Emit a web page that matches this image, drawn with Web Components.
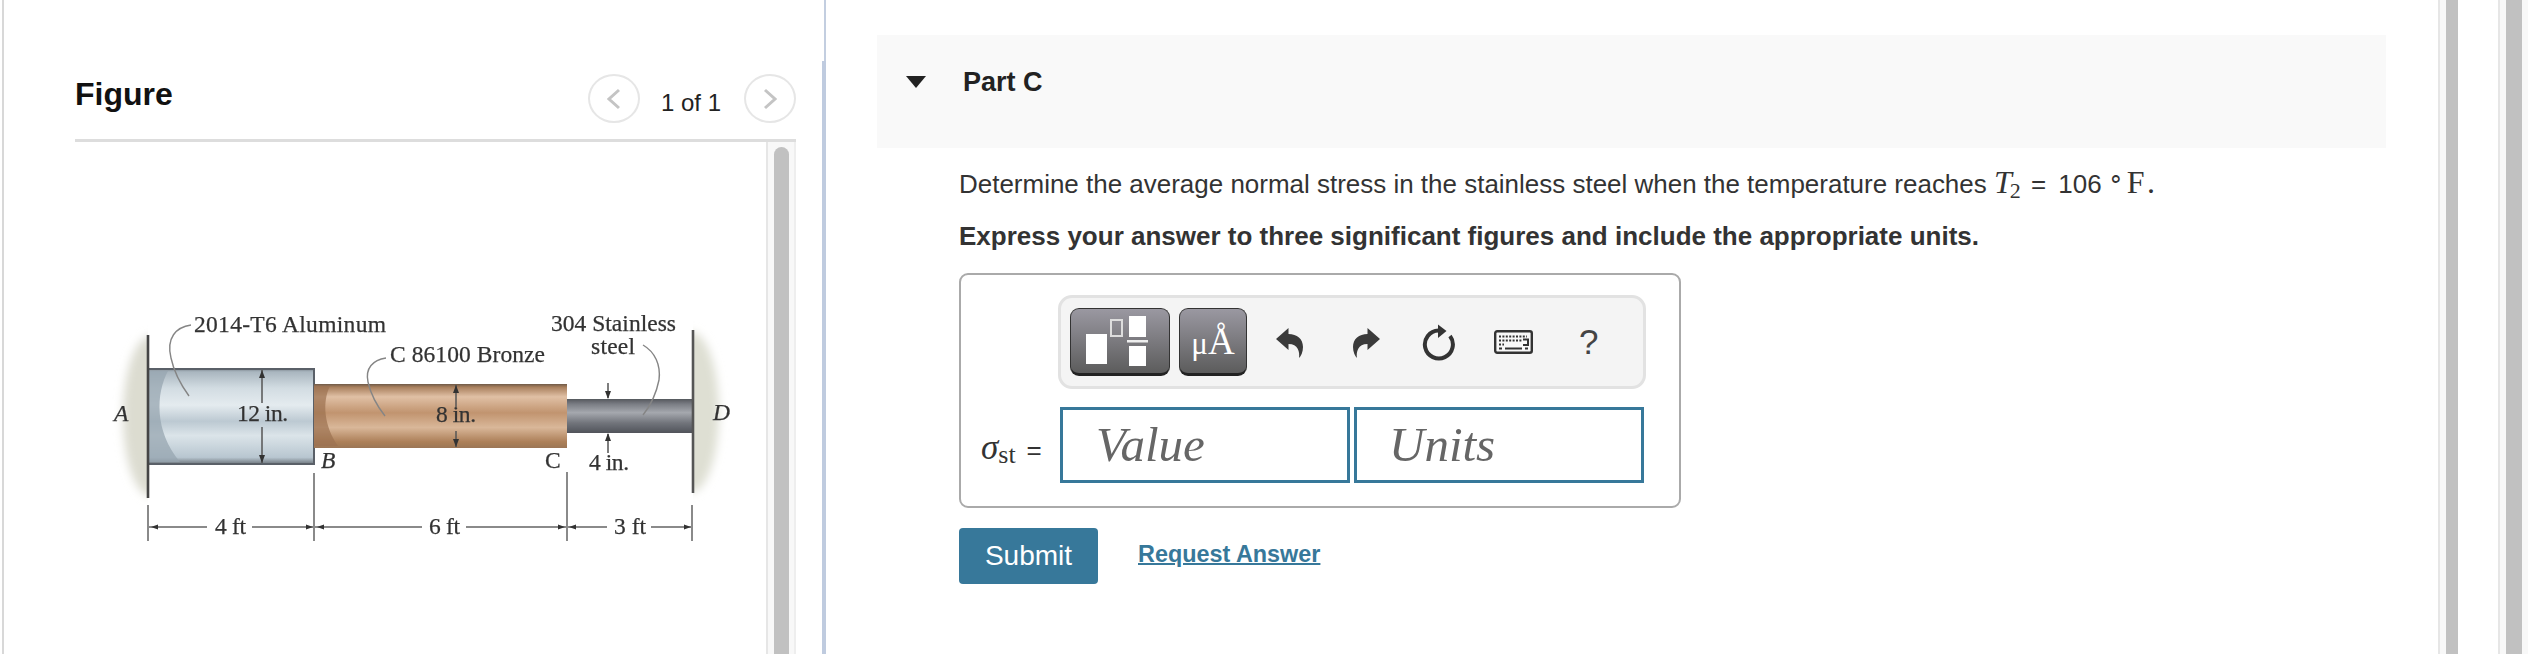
<!DOCTYPE html>
<html lang="en">
<head>
<meta charset="utf-8">
<title>Part C</title>
<style>
  html, body { margin: 0; height: 100%; background: #fff; }
  body { width: 2528px; height: 654px; overflow: hidden; display: flex; font-family: "Liberation Sans", Arial, sans-serif; }
</style>
</head>
<body>
  <figure-pane></figure-pane>
  <pane-divider></pane-divider>
  <part-pane>
    <p>Determine the average normal stress in the stainless steel when the temperature reaches <math-text></math-text></p>
    <p class="strong"><b>Express your answer to three significant figures and include the appropriate units.</b></p>
  </part-pane>
  <page-scrollbar style="--track-width:20px; --thumb-width:12px; --tail:0px"></page-scrollbar>
  <div style="width:40px;flex:none"></div>
  <page-scrollbar style="--track-width:30px; --thumb-width:16px; --tail:4px"></page-scrollbar>

<script>
class NavCircle extends HTMLElement {
  constructor() {
    super();
    this.attachShadow({ mode: 'open' });
  }

  connectedCallback() {
    const next = this.getAttribute('dir') === 'next';
    const pts = next ? '2,2 12,11 2,20' : '12,2 2,11 12,20';
    this.shadowRoot.innerHTML = `
      <style>
        :host { display: flex; width: 52px; height: 49px; box-sizing: border-box; border: 2px solid #e6e6e6; border-radius: 50%; align-items: center; justify-content: center; flex: none; }
        svg { display: block; }
      </style>
      <svg width="14" height="22" viewBox="0 0 14 22"><polyline points="${pts}" fill="none" stroke="#c4c4c4" stroke-width="3"/></svg>
    `;
  }
}
customElements.define('nav-circle', NavCircle);

class FigureDiagram extends HTMLElement {
  constructor() {
    super();
    this.attachShadow({ mode: 'open' });
  }

  connectedCallback() {
    // viewBox uses page coordinates so numbers can be read off the reference
    this.shadowRoot.innerHTML = `
      <style>
        :host { display: block; flex: 1; min-width: 0; overflow: hidden; }
        svg { display: block; }
        text { font-family: "Liberation Serif", "Times New Roman", serif; font-size: 23.5px; fill: #333; stroke: #333; stroke-width: .25; }
        .it { font-style: italic; }
        .lead { fill: none; stroke: #858585; stroke-width: 1.4; }
        .dim { stroke: #8a8a8a; stroke-width: 2; }
        .tick { stroke: #555; stroke-width: 1.5; }
      </style>
      <svg width="692" height="512" viewBox="74 142 692 512">
        <defs>
          <linearGradient id="alu" x1="0" y1="0" x2="0" y2="1">
            <stop offset="0" stop-color="#808a92"/><stop offset=".03" stop-color="#a9b6bf"/>
            <stop offset=".2" stop-color="#d2dce2"/><stop offset=".38" stop-color="#e4ebef"/>
            <stop offset=".55" stop-color="#bcc9d2"/><stop offset=".7" stop-color="#dbe4e9"/>
            <stop offset=".93" stop-color="#b8c6d0"/><stop offset="1" stop-color="#6f777e"/>
          </linearGradient>
          <linearGradient id="bro" x1="0" y1="0" x2="0" y2="1">
            <stop offset="0" stop-color="#6f5a48"/><stop offset=".05" stop-color="#a9805e"/>
            <stop offset=".2" stop-color="#e0c0a5"/><stop offset=".45" stop-color="#c1946f"/>
            <stop offset=".68" stop-color="#d9b799"/><stop offset=".9" stop-color="#ad8059"/>
            <stop offset="1" stop-color="#9b7555"/>
          </linearGradient>
          <linearGradient id="ste" x1="0" y1="0" x2="0" y2="1">
            <stop offset="0" stop-color="#55585e"/><stop offset=".15" stop-color="#7a7d84"/>
            <stop offset=".4" stop-color="#a5a8ae"/><stop offset=".7" stop-color="#72757c"/>
            <stop offset="1" stop-color="#50535a"/>
          </linearGradient>
          <filter id="soft" x="-5%" y="-5%" width="110%" height="110%"><feGaussianBlur stdDeviation=".7"/></filter>
          <filter id="wall" x="-40%" y="-20%" width="180%" height="140%"><feGaussianBlur stdDeviation="5"/></filter>
          <clipPath id="clipL"><rect x="74" y="300" width="73" height="230"/></clipPath>
          <clipPath id="clipR"><rect x="692" y="300" width="70" height="230"/></clipPath>
        </defs>
        <g clip-path="url(#clipL)"><ellipse cx="150" cy="416" rx="28" ry="80" fill="#dcdcd0" filter="url(#wall)"/></g>
        <g clip-path="url(#clipR)"><ellipse cx="690" cy="412" rx="28" ry="80" fill="#dedfd3" filter="url(#wall)"/></g>
        <g filter="url(#soft)">
          <rect x="147" y="369" width="166" height="95" fill="url(#alu)"/>
          <path d="M147 371h20c-12 22-14 60 12 91h-32z" fill="#97a5b0" opacity=".75"/>
          <rect x="147" y="369" width="166" height="95" fill="none" stroke="#5a6167" stroke-width="2"/>
          <rect x="313" y="384" width="253" height="64" fill="url(#bro)"/>
          <path d="M313 386h16c-8 16-6 40 8 60h-24z" fill="#9b7050" opacity=".7"/>
          <rect x="566" y="399" width="126" height="34" fill="url(#ste)"/>
          <line x1="147" y1="335" x2="147" y2="498" stroke="#444" stroke-width="2.6"/>
          <line x1="692" y1="330" x2="692" y2="493" stroke="#555" stroke-width="2.6"/>
          <path class="lead" d="M190 325C175 327 165 338 170 358C173 372 180 385 188 396"/>
          <path class="lead" d="M385 358C372 360 364 368 367 382C370 395 376 406 384 416"/>
          <path class="lead" d="M642 345C654 352 660 365 658 380C655 395 650 405 642 415"/>
          <path class="tick" d="M261 370V403M261 427V463M455 385V407M455 431V447M607 383V398M607 434V453"/>
          <path d="M261 370l-3 8h6zM261 463l-3-8h6zM455 385l-3 8h6zM455 447l-3-8h6zM607 399l-3-8h6zM607 433l-3 8h6z" fill="#333"/>
          <path class="dim" d="M147 505V541M313 473V541M566 472V541M691 505V541" stroke-width="1.6"/>
          <path class="dim" d="M147 527H206M251 527H313M314 527H421M465 527H565M567 527H606M650 527H691"/>
          <path d="M150 527l7-2.5v5zM312 527l-7-2.5v5zM316 527l7-2.5v5zM564 527l-7-2.5v5zM568 527l7-2.5v5zM690 527l-7-2.5v5z" fill="#333"/>
          <text x="193" y="332" textLength="192">2014-T6 Aluminum</text>
          <text x="389" y="362" textLength="155">C 86100 Bronze</text>
          <text x="550" y="331" textLength="125">304 Stainless</text>
          <text x="590" y="354" textLength="44">steel</text>
          <text x="236" y="421" textLength="51">12 in.</text>
          <text x="435" y="422" textLength="40">8 in.</text>
          <text x="588" y="470" textLength="40">4 in.</text>
          <text x="214" y="534" textLength="31">4 ft</text>
          <text x="428" y="534" textLength="31">6 ft</text>
          <text x="613" y="534" textLength="32">3 ft</text>
          <text class="it" x="113" y="421">A</text>
          <text class="it" x="320" y="468">B</text>
          <text x="544" y="468">C</text>
          <text class="it" x="712" y="420">D</text>
        </g>
      </svg>
    `;
  }
}
customElements.define('figure-diagram', FigureDiagram);

class FigurePane extends HTMLElement {
  constructor() {
    super();
    this.attachShadow({ mode: 'open' });
  }

  connectedCallback() {
    this.shadowRoot.innerHTML = `
      <style>
        :host { display: flex; flex-direction: column; flex: none; width: 820px; height: 654px; box-sizing: border-box; margin-left: 2px; padding: 0 26px 0 71px; border-left: 2px solid #d8d8d8; }
        header { display: flex; align-items: flex-start; box-sizing: border-box; border-bottom: 3px solid #ddd; height: 142px; padding-top: 74px; }
        h2 { margin: 2px 0 0; font-size: 32px; line-height: 36px; font-weight: 700; color: #111; flex: 1; }
        .count { font-size: 24px; line-height: 28px; color: #222; margin: 15px 23px 0 21px; }
        .viewer { flex: 1; display: flex; min-height: 0; }
        .track { flex: none; width: 30px; box-sizing: border-box; background: #f8f8f8; border-left: 2px solid #e6e6e6; border-right: 2px solid #eee; padding: 5px 5px 0 6px; }
        .thumb { height: 100%; background: #c1c1c1; border-radius: 8px 8px 0 0; }
      </style>
      <header>
        <h2>Figure</h2>
        <nav-circle dir="prev"></nav-circle>
        <span class="count">1 of 1</span>
        <nav-circle dir="next"></nav-circle>
      </header>
      <div class="viewer">
        <figure-diagram></figure-diagram>
        <div class="track"><div class="thumb"></div></div>
      </div>
    `;
  }
}
customElements.define('figure-pane', FigurePane);

class PaneDivider extends HTMLElement {
  constructor() {
    super();
    this.attachShadow({ mode: 'open' });
    this.shadowRoot.innerHTML = `
      <style>
        :host { display: flex; flex-direction: column; flex: none; width: 4px; height: 654px; }
        .top { height: 61px; margin-left: 2px; background: #c3cee0; }
        .rest { flex: 1; background: #bfcbdf; }
      </style>
      <div class="top"></div><div class="rest"></div>
    `;
  }
}
customElements.define('pane-divider', PaneDivider);

class MathText extends HTMLElement {
  constructor() {
    super();
    this.attachShadow({ mode: 'open' });
    this.shadowRoot.innerHTML = `
      <style>
        :host { display: inline; }
        .m { font-family: "Liberation Serif", "Times New Roman", serif; font-size: 32px; line-height: 0; }
        sub { font-family: "Liberation Serif", serif; font-size: 22px; line-height: 0; vertical-align: -5px; margin-left: -2px; }
        .eq { margin: 0 5px 0 3px; }
        .deg { font-size: 25px; line-height: 0; vertical-align: 7px; margin: 0 3px 0 6px; }
        .f { letter-spacing: 5px; }
      </style>
      <i class="m">T</i><sub>2</sub><span class="eq"> = </span>106<span class="m"><span class="deg">∘</span><span class="f">F.</span></span>
    `;
  }
}
customElements.define('math-text', MathText);

class MathToolbar extends HTMLElement {
  constructor() {
    super();
    this.attachShadow({ mode: 'open' });
    this.shadowRoot.innerHTML = `
      <style>
        :host { display: flex; align-items: center; height: 94px; box-sizing: border-box; margin-left: 97px; width: 588px; background: #f4f4f4; border: 3px solid #e2e2e2; border-radius: 14px; padding-left: 9px; }
        .btn { box-sizing: border-box; height: 68px; border: 1px solid #333; border-bottom-width: 3px; border-bottom-color: #222; border-radius: 9px; background: linear-gradient(#9a98a1, #5c5c5c); flex: none; }
        .b1 { width: 100px; }
        .b2 { width: 68px; margin-left: 9px; color: #fff; font-family: "Liberation Serif", serif; display: flex; align-items: baseline; justify-content: center; line-height: 64px; padding-top: 1px; }
        .b2 .mu { font-size: 31px; }
        .b2 .ang { font-size: 37px; }
        svg { display: block; flex: none; }
        .undo { margin-left: 29px; }
        .redo { margin-left: 50px; }
        .reset { margin-left: 42px; }
        .keys { margin-left: 39px; }
        .help { margin-left: 46px; font-size: 35px; line-height: 40px; color: #444; }
      </style>
      <div class="btn b1">
        <svg width="98" height="64" viewBox="0 0 98 64">
          <rect x="15" y="25" width="21" height="30" fill="#fff"/>
          <rect x="40" y="11" width="11" height="16" fill="none" stroke="#ddd" stroke-width="2"/>
          <rect x="58" y="7" width="17" height="21" fill="#fff"/>
          <rect x="56" y="31" width="21" height="2.5" fill="#eee"/>
          <rect x="58" y="37" width="17" height="20" fill="#fff"/>
        </svg>
      </div>
      <div class="btn b2"><span class="mu">μ</span><span class="ang">Å</span></div>
      <svg class="undo" width="27" height="31" viewBox="0 0 27 31"><path d="M0 12L12.5 1V7C21 7 27 12 27 20C27 25 25 29 23 31C24 25 22 17 12.5 17V23Z" fill="#3a3a3a"/></svg>
      <svg class="redo" width="27" height="31" viewBox="0 0 27 31"><path d="M27 12L14.5 1V7C6 7 0 12 0 20C0 25 2 29 4 31C3 25 5 17 14.5 17V23Z" fill="#3a3a3a"/></svg>
      <svg class="reset" width="33" height="37" viewBox="0 0 33 37"><path d="M16.5 6.5A14 14 0 1 0 28 12" fill="none" stroke="#333" stroke-width="4"/><path d="M16 0.5L24.5 7L16 14Z" fill="#333"/></svg>
      <svg class="keys" width="39" height="24" viewBox="0 0 39 24">
        <rect x="1.2" y="1.2" width="36.6" height="21.6" rx="2" fill="#f8f8f8" stroke="#333" stroke-width="2.4"/>
        <path d="M5 6.5H33M5 10.5H28M5 14.5H10" stroke="#333" stroke-width="2" stroke-dasharray="2 1.4" fill="none"/>
        <path d="M29 9.5H34V15H29M5 18.5H8M11 18.5H28M31 18.5H34" stroke="#333" stroke-width="2" fill="none"/>
      </svg>
      <span class="help">?</span>
    `;
  }
}
customElements.define('math-toolbar', MathToolbar);

class AnswerBox extends HTMLElement {
  constructor() {
    super();
    this.attachShadow({ mode: 'open' });
    this.shadowRoot.innerHTML = `
      <style>
        :host { display: block; width: 722px; height: 235px; box-sizing: border-box; border: 2.5px solid #aaa; border-radius: 9px; padding-top: 20px; }
        .row { display: flex; align-items: center; margin-top: 18px; }
        .label { width: 99px; box-sizing: border-box; padding: 10px 0 0 20px; font-size: 26px; color: #333; white-space: nowrap; flex: none; }
        .label i, .label sub { font-family: "Liberation Serif", serif; }
        .label i { font-size: 35px; line-height: 0; }
        .label sub { font-size: 26px; line-height: 0; vertical-align: -4px; margin-right: 11px; }
        .field { box-sizing: border-box; width: 290px; height: 76px; border: 3px solid #37789a; display: flex; align-items: center; font: italic 49px "Liberation Serif", serif; color: #666; padding: 0 0 2px 33px; }
        .field + .field { margin-left: 4px; padding-left: 32px; }
      </style>
      <math-toolbar></math-toolbar>
      <div class="row">
        <span class="label"><i>σ</i><sub>st</sub>=</span>
        <div class="field">Value</div>
        <div class="field">Units</div>
      </div>
    `;
  }
}
customElements.define('answer-box', AnswerBox);

class PartPane extends HTMLElement {
  constructor() {
    super();
    this.attachShadow({ mode: 'open' });
    this.shadowRoot.innerHTML = `
      <style>
        :host { display: block; flex: none; width: 1612px; height: 654px; box-sizing: border-box; padding: 35px 52px 0 51px; }
        .head { display: flex; align-items: center; height: 113px; background: #f9f9f9; padding: 0 0 19px 29px; box-sizing: border-box; }
        .arrow { width: 0; height: 0; border-left: 10.5px solid transparent; border-right: 10.5px solid transparent; border-top: 12px solid #222; }
        h3 { margin: 0 0 0 37px; font-size: 27px; line-height: 32px; color: #222; }
        .body { padding: 0 0 0 82px; }
        ::slotted(p) { margin: 0; font-size: 25.97px; line-height: 36px; color: #333; white-space: nowrap; padding-top: 18px; }
        ::slotted(p.strong) { font-size: 26px; padding-top: 16px; }
        answer-box { margin-top: 19px; }
        .actions { display: flex; align-items: flex-start; margin-top: 20px; }
        button { box-sizing: border-box; width: 139px; height: 56px; border: 0; border-radius: 4px; background: #37789a; color: #fff; font: 28px/54px "Liberation Sans", sans-serif; padding: 0; }
        a { margin: 12px 0 0 40px; font-size: 23.4px; line-height: 28px; font-weight: 700; color: #37789a; text-decoration: underline; text-decoration-thickness: 2px; }
      </style>
      <div class="head"><span class="arrow"></span><h3>Part C</h3></div>
      <div class="body">
        <slot></slot>
        <answer-box></answer-box>
        <div class="actions"><button type="button">Submit</button><a href="#">Request Answer</a></div>
      </div>
    `;
  }
}
customElements.define('part-pane', PartPane);

class PageScrollbar extends HTMLElement {
  constructor() {
    super();
    this.attachShadow({ mode: 'open' });
    this.shadowRoot.innerHTML = `
      <style>
        :host { display: block; flex: none; height: 654px; width: var(--track-width); box-sizing: border-box; background: #f8f8f8; border-left: 2px solid #e6e6e6; padding-left: 6px; padding-right: var(--tail); }
        div { width: var(--thumb-width); height: 100%; background: #c1c1c1; }
      </style>
      <div></div>
    `;
  }
}
customElements.define('page-scrollbar', PageScrollbar);
</script>
</body>
</html>
